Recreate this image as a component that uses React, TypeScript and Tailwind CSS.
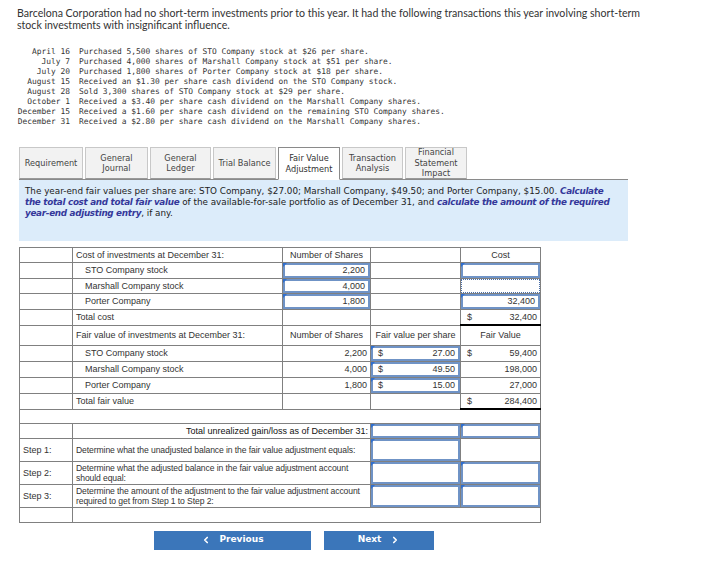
import React from 'react';
import { ChevronLeft, ChevronRight } from 'lucide-react';

const transactions = [
  ['April 16', 'Purchased 5,500 shares of STO Company stock at $26 per share.'],
  ['July 7', 'Purchased 4,000 shares of Marshall Company stock at $51 per share.'],
  ['July 20', 'Purchased 1,800 shares of Porter Company stock at $18 per share.'],
  ['August 15', 'Received an $1.30 per share cash dividend on the STO Company stock.'],
  ['August 28', 'Sold 3,300 shares of STO Company stock at $29 per share.'],
  ['October 1', 'Received a $3.40 per share cash dividend on the Marshall Company shares.'],
  ['December 15', 'Received a $1.60 per share cash dividend on the remaining STO Company shares.'],
  ['December 31', 'Received a $2.80 per share cash dividend on the Marshall Company shares.'],
];

const tabs = [
  { id: 'req', label: ['Requirement'], w: 'w-[64px]' },
  { id: 'gj', label: ['General', 'Journal'], w: 'w-[63px]' },
  { id: 'gl', label: ['General', 'Ledger'], w: 'w-[61px]' },
  { id: 'tb', label: ['Trial Balance'], w: 'w-[63px]' },
  { id: 'fva', label: ['Fair Value', 'Adjustment'], w: 'w-[62px]' },
  { id: 'ta', label: ['Transaction', 'Analysis'], w: 'w-[61px]' },
  { id: 'fsi', label: ['Financial', 'Statement', 'Impact'], w: 'w-[62px]' },
];

// blue-bordered input cell, optionally with a $ sign on the left
const Input = ({ value, dollar, dotted }: { value?: string; dollar?: boolean; dotted?: boolean }) => (
  <div
    className={`relative h-full flex items-center justify-between px-[3px] ${
      dotted ? 'border border-dotted border-[#4a6fa8]' : 'border-2 border-[#6f93c6]'
    }`}
  >
    {!dotted && (
      <span className="absolute -left-[2px] -top-[2px] w-0 h-0 border-t-[4px] border-r-[4px] border-t-[#2f6fd0] border-r-transparent" />
    )}
    <span className="pl-[2px]">{dollar ? '$' : ''}</span>
    <span>{value}</span>
  </div>
);

const Money = ({ value, dollar }: { value: string; dollar?: boolean }) => (
  <div className="flex justify-between px-[3px]">
    <span className="pl-[3px]">{dollar ? '$' : ''}</span>
    <span>{value}</span>
  </div>
);

const td = 'border border-[#808080] p-0 align-middle';
const em = 'italic font-bold text-[#35389a] tracking-[-0.3px]';

export default function App() {
  return (
    <div className="w-[704px] h-[568px] bg-white text-[#333] overflow-hidden">
      <p className="pl-[17px] w-[660px] pt-[7px] text-[10.6px] leading-[12px] text-[#333]" style={{ fontFamily: 'Lato, sans-serif' }}>
        Barcelona Corporation had no short-term investments prior to this year. It had the following transactions this year involving{' '}
        <span className="whitespace-nowrap">short-term</span> stock investments with insignificant influence.
      </p>

      <div className="mt-[16px] pl-[17px] text-[7.9px] leading-[10px] text-[#333]" style={{ fontFamily: '"DejaVu Sans Mono", monospace' }}>
        {transactions.map(([d, t]) => (
          <div key={d} className="flex whitespace-pre">
            <span className="w-[53px] text-right">{d}</span>
            <span className="pl-[9px]">{t}</span>
          </div>
        ))}
      </div>

      <div className="mx-[19px] mt-[20px]" style={{ fontFamily: '"DejaVu Sans", Verdana, sans-serif' }}>
        <div className="flex gap-[2px] items-end">
          {tabs.map((t) => {
            const active = t.id === 'fva';
            return (
              <div
                key={t.id}
                className={`${t.w} h-[32px] flex flex-col items-center justify-center text-center text-[8.2px] leading-[10.5px] border ${
                  active
                    ? 'bg-white border-[#8a8a8a] border-b-white relative -mb-px h-[33px] z-10'
                    : 'bg-[#f2f2f2] border-[#c8c8c8] border-b-[#999] text-[#444]'
                }`}
              >
                {t.label.map((l) => (
                  <span key={l}>{l}</span>
                ))}
              </div>
            );
          })}
        </div>
        <div className="w-[609px] h-[62px] bg-[#dcecfa] border-t border-[#8a8a8a] pl-[6px] pr-[13px] pt-[6px] text-[8.8px] leading-[11px] text-[#222]">
          The year-end fair values per share are: STO Company, $27.00; Marshall Company, $49.50; and Porter Company, $15.00.{' '}
          <span className={em}>Calculate the total cost and total fair value</span> of the available-for-sale portfolio as of December 31, and{' '}
          <span className={em}>
            calculate the amount of the required <span className="whitespace-nowrap">year-end</span> adjusting entry
          </span>
          , if any.
        </div>
      </div>

      <table
        className="ml-[19px] mt-[6px] border-collapse table-fixed text-[9px] leading-[10px] text-[#333]"
        style={{ fontFamily: '"Liberation Sans", Arial, sans-serif', width: 521 }}
      >
        <colgroup>
          <col className="w-[53px]" />
          <col className="w-[210px]" />
          <col className="w-[88px]" />
          <col className="w-[90px]" />
          <col className="w-[80px]" />
        </colgroup>
        <tbody>
          <tr className="h-[15px]">
            <td className={td} />
            <td className={`${td} pl-[3px]`}>Cost of investments at December 31:</td>
            <td className={`${td} text-center`}>Number of Shares</td>
            <td className={td} />
            <td className={`${td} text-center`}>Cost</td>
          </tr>
          {[
            ['STO Company stock', '2,200', <Input />],
            ['Marshall Company stock', '4,000', <Input dotted />],
            ['Porter Company', '1,800', <Input value="32,400" />],
          ].map(([name, n, cost], i) => (
            <tr key={i} className="h-[15.5px]">
              <td className={td} />
              <td className={`${td} pl-[12px]`}>{name}</td>
              <td className={`${td} h-[15.5px]`}>
                <Input value={n as string} />
              </td>
              <td className={td} />
              <td className={`${td} h-[15.5px]`}>{cost}</td>
            </tr>
          ))}
          <tr className="h-[16px]">
            <td className={td} />
            <td className={`${td} pl-[3px]`}>Total cost</td>
            <td className={td} />
            <td className={td} />
            <td className={`${td} border-b-2 border-b-black`}>
              <Money value="32,400" dollar />
            </td>
          </tr>
          <tr className="h-[20px]">
            <td className={td} />
            <td className={`${td} pl-[3px]`}>Fair value of investments at December 31:</td>
            <td className={`${td} text-center`}>Number of Shares</td>
            <td className={`${td} text-center`}>Fair value per share</td>
            <td className={`${td} text-center`}>Fair Value</td>
          </tr>
          {[
            ['STO Company stock', '2,200', '27.00', '59,400', true],
            ['Marshall Company stock', '4,000', '49.50', '198,000', false],
            ['Porter Company', '1,800', '15.00', '27,000', false],
          ].map(([name, n, p, fv, d], i) => (
            <tr key={i} className="h-[16px]">
              <td className={td} />
              <td className={`${td} pl-[12px]`}>{name as string}</td>
              <td className={`${td} text-right pr-[3px]`}>{n as string}</td>
              <td className={`${td} h-[16px]`}>
                <Input value={p as string} dollar />
              </td>
              <td className={td}>
                <Money value={fv as string} dollar={d as boolean} />
              </td>
            </tr>
          ))}
          <tr className="h-[16px]">
            <td className={td} />
            <td className={`${td} pl-[3px]`}>Total fair value</td>
            <td className={td} />
            <td className={td} />
            <td className={`${td} border-b-2 border-b-black`}>
              <Money value="284,400" dollar />
            </td>
          </tr>
          <tr className="h-[14px]">
            <td colSpan={5} className="border-x border-[#808080] p-0" />
          </tr>
          <tr className="h-[15px]">
            <td className={td} />
            <td colSpan={2} className={`${td} text-right pr-[2px] text-[#111]`}>
              Total unrealized gain/loss as of December 31:
            </td>
            <td className={`${td} h-[15px]`}>
              <Input />
            </td>
            <td className={`${td} h-[15px]`}>
              <Input />
            </td>
          </tr>
          {[
            ['Step 1:', 'Determine what the unadjusted balance in the fair value adjustment equals:', false],
            ['Step 2:', 'Determine what the adjusted balance in the fair value adjustment account should equal:', true],
            ['Step 3:', 'Determine the amount of the adjustment to the fair value adjustment account required to get from Step 1 to Step 2:', true],
          ].map(([s, t, second], i) => (
            <tr key={i} className="h-[23px]">
              <td className={`${td} pl-[3px]`}>{s as string}</td>
              <td colSpan={2} className={`${td} pl-[3px] pr-0 text-[8.6px] tracking-[-0.1px]`}>
                {t as string}
              </td>
              <td className={`${td} h-[23px]`}>
                <Input />
              </td>
              <td className={`${td} h-[23px]`}>{second ? <Input /> : null}</td>
            </tr>
          ))}
          <tr className="h-[15px]">
            <td className={td} />
            <td colSpan={4} className={td} />
          </tr>
        </tbody>
      </table>

      <div className="flex gap-[13px] ml-[154px] mt-[8px]" style={{ fontFamily: '"DejaVu Sans", Verdana, sans-serif' }}>
        <button className="w-[157px] h-[19px] bg-[#3b76ba] text-white text-[9px] font-bold flex items-center justify-center gap-[8px]">
          <ChevronLeft className="w-[10px] h-[10px]" strokeWidth={4} />
          Previous
        </button>
        <button className="w-[110px] h-[19px] bg-[#3b76ba] text-white text-[9px] font-bold flex items-center justify-center gap-[9px]">
          Next
          <ChevronRight className="w-[10px] h-[10px]" strokeWidth={4} />
        </button>
      </div>
    </div>
  );
}
